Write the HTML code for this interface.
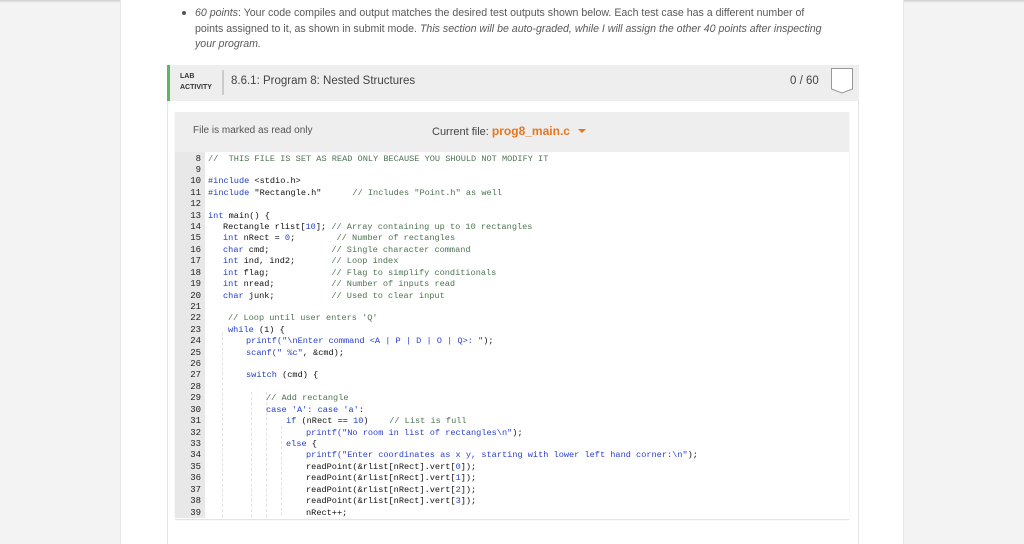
<!DOCTYPE html>
<html><head><meta charset="utf-8"><style>
*{margin:0;padding:0;box-sizing:border-box}
html{overflow:hidden;width:1024px;height:544px}
body{width:1024px;height:544px;background:#f3f3f3;position:relative;overflow:hidden;font-family:"Liberation Sans",sans-serif}
.page{position:absolute;left:120px;top:0;width:784px;height:544px;background:#fff;border-left:1px solid #e6e6e6;border-right:1px solid #e6e6e6}
.shadow{position:absolute;left:0;top:0;width:1024px;height:3px;background:linear-gradient(#ccc,rgba(255,255,255,0))}
.intro{position:absolute;left:195px;top:6px;width:660px;font-size:10.6px;line-height:15.5px;color:#5a5a5a}
.intro i{font-style:italic}
.bul{position:absolute;left:182px;top:11px;width:4px;height:4px;border-radius:50%;background:#555}
.lab{position:absolute;left:167px;top:65px;width:692px;height:479px;border:1px solid #e4e4e4;border-top:none;border-bottom:none}
.labhd{position:absolute;left:167px;top:65px;width:692px;height:36px;background:#eee;border-left:3px solid #5cb85c}
.lbl{position:absolute;left:10px;font-size:7px;font-weight:bold;color:#333}
.div{position:absolute;left:52px;top:5px;width:2px;height:25px;background:#ccc}
.title{position:absolute;left:61px;top:10px;font-size:11.5px;color:#444}
.score{position:absolute;left:620px;top:10px;font-size:11.5px;color:#444}
.ed{position:absolute;left:175px;top:112px;width:674px;height:407px;background:#fff;box-shadow:0 1px 1px #ddd}
.edhd{position:absolute;left:0;top:0;width:674px;height:40px;background:#eee}
.code{position:absolute;left:175px;top:152px;width:674px;height:366px;overflow:hidden;background:#fff}
.gut{position:absolute;left:0;top:0;width:30px;height:366px;background:#e8e8e8}
.ln{position:absolute;left:0;height:11.42px;width:674px;font-family:"Liberation Mono",monospace;font-size:8.6px;line-height:11.42px;color:#111;white-space:pre}
.ln .n{position:absolute;right:648px;color:#222;font-size:9px}
.ln .c{position:absolute}
.k{color:#2340c8}.cm{color:#4f7454}.s{color:#2a3fd0}
.g{position:absolute;border-left:1px dashed #e2e2e2;width:0}
</style></head><body>
<div class="shadow"></div>
<div class="page"></div>
<div class="bul"></div>
<div class="intro"><i>60 points</i>: Your code compiles and output matches the desired test outputs shown below. Each test case has a different number of<br>points assigned to it, as shown in submit mode. <i>This section will be auto-graded, while I will assign the other 40 points after inspecting<br>your program.</i></div>
<div class="lab"></div>
<div class="labhd">
<div class="lbl" style="top:8px">LAB</div><div class="lbl" style="top:19px">ACTIVITY</div>
<div class="div"></div>
<div class="title">8.6.1: Program 8: Nested Structures</div>
<div class="score">0 / 60</div>
<svg style="position:absolute;left:660px;top:2px" width="24" height="28"><path d="M1.5 1.5H22.5V22L12 26L1.5 22Z" fill="#fff" stroke="#999" stroke-width="1"/></svg>
</div>
<div class="ed"><div class="edhd">
<div style="position:absolute;left:18px;top:13px;font-size:10px;color:#555">File is marked as read only</div>
<div style="position:absolute;left:257px;top:12px;font-size:11px;color:#444">Current file: <b style="color:#e8761e;font-size:12px">prog8_main.c</b></div>
<div style="position:absolute;left:403px;top:17px;width:0;height:0;border-left:4px solid transparent;border-right:4px solid transparent;border-top:4px solid #e8761e"></div>
</div>
<svg style="position:absolute;left:664px;top:396px" width="9" height="9"><path d="M1 8L8 1M4 8L8 4M7 8L8 7" stroke="#999" stroke-width="1"/></svg>
</div>
<div class="code"><div class="gut"></div>
<div class="g" style="left:47px;top:180px;height:190px"></div>
<div class="g" style="left:76px;top:240px;height:130px"></div>
<div class="g" style="left:91px;top:240px;height:130px"></div>
<div class="g" style="left:106px;top:274px;height:100px"></div>
<div id="L"></div>
</div>
<script>
var L=[
[8,33,'<span class="cm">//  THIS FILE IS SET AS READ ONLY BECAUSE YOU SHOULD NOT MODIFY IT</span>'],
[9,33,''],
[10,33,'<span class="k">#include</span> &lt;stdio.h&gt;'],
[11,33,'<span class="k">#include</span> "Rectangle.h"      <span class="cm">// Includes "Point.h" as well</span>'],
[12,33,''],
[13,33,'<span class="k">int</span> main() {'],
[14,48,'Rectangle rlist[<span class="k">10</span>]; <span class="cm">// Array containing up to 10 rectangles</span>'],
[15,48,'<span class="k">int</span> nRect = <span class="k">0</span>;        <span class="cm">// Number of rectangles</span>'],
[16,48,'<span class="k">char</span> cmd;            <span class="cm">// Single character command</span>'],
[17,48,'<span class="k">int</span> ind, ind2;       <span class="cm">// Loop index</span>'],
[18,48,'<span class="k">int</span> flag;            <span class="cm">// Flag to simplify conditionals</span>'],
[19,48,'<span class="k">int</span> nread;           <span class="cm">// Number of inputs read</span>'],
[20,48,'<span class="k">char</span> junk;           <span class="cm">// Used to clear input</span>'],
[21,33,''],
[22,53,'<span class="cm">// Loop until user enters \'Q\'</span>'],
[23,53,'<span class="k">while</span> (1) {'],
[24,71,'<span class="s">printf("\\nEnter command &lt;A | P | D | O | Q&gt;: "</span>);'],
[25,71,'<span class="s">scanf(" %c"</span>, &amp;cmd);'],
[26,33,''],
[27,71,'<span class="k">switch</span> (cmd) {'],
[28,33,''],
[29,91,'<span class="cm">// Add rectangle</span>'],
[30,91,'<span class="k">case \'A\': case \'a\'</span>:'],
[31,111,'<span class="k">if</span> (nRect == <span class="k">10</span>)    <span class="cm">// List is full</span>'],
[32,131,'<span class="s">printf("No room in list of rectangles\\n"</span>);'],
[33,111,'<span class="k">else</span> {'],
[34,131,'<span class="s">printf("Enter coordinates as x y, starting with lower left hand corner:\\n"</span>);'],
[35,131,'readPoint(&amp;rlist[nRect].vert[<span class="k">0</span>]);'],
[36,131,'readPoint(&amp;rlist[nRect].vert[<span class="k">1</span>]);'],
[37,131,'readPoint(&amp;rlist[nRect].vert[<span class="k">2</span>]);'],
[38,131,'readPoint(&amp;rlist[nRect].vert[<span class="k">3</span>]);'],
[39,131,'nRect++;']];
var h='';for(var i=0;i<L.length;i++){h+='<div class="ln" style="top:'+(1.5+i*11.42)+'px"><span class="n">'+L[i][0]+'</span><span class="c" style="left:'+L[i][1]+'px">'+L[i][2]+'</span></div>';}
document.getElementById('L').innerHTML=h;
</script>
</body></html>
